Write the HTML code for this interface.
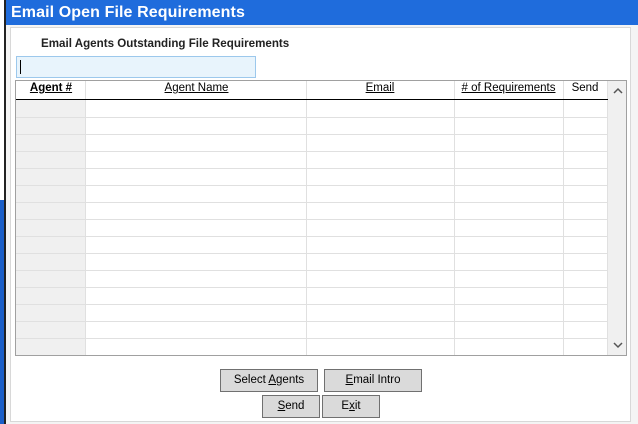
<!DOCTYPE html>
<html><head><style>
*{margin:0;padding:0;box-sizing:border-box}
body{width:638px;height:424px;overflow:hidden;background:#f0f0f0;font-family:"Liberation Sans",Arial,sans-serif;position:relative}
.a{position:absolute}
.hd{font-size:11.5px;color:#000;text-align:center;top:82px;text-decoration:underline}
.btn{position:absolute;background:#dadada;border:1px solid #707070;font-size:11.5px;text-align:center;line-height:20px;color:#000}
</style></head><body>
<div class="a" style="left:0;top:0;width:5px;height:200px;background:#fff"></div>
<div class="a" style="left:0;top:200px;width:5px;height:224px;background:#1c5fc8"></div>
<div class="a" style="left:4px;top:0;width:2px;height:424px;background:#222"></div>
<div class="a" style="left:6px;top:0;width:632px;height:25px;background:#1f6cdc;color:#fff;font-weight:bold;font-size:16px;line-height:26px;padding-left:5px;letter-spacing:0.1px">Email Open File Requirements</div>
<div class="a" style="left:6px;top:25px;width:632px;height:399px;background:#f4f4f4"></div>
<div class="a" style="left:10px;top:27px;width:621px;height:395px;background:#fff;border:1px solid #d8d8d8"></div>
<div class="a" style="left:41px;top:37px;font-size:11.6px;font-weight:bold;color:#222">Email Agents Outstanding File Requirements</div>
<div class="a" style="left:16px;top:56px;width:240px;height:22px;background:#e8f4fc;border:1px solid #9cc8ec"></div>
<div class="a" style="left:20px;top:60px;width:1px;height:14px;background:#000"></div>
<div class="a" style="left:15px;top:80px;width:612px;height:276px;border:1px solid #a0a0a0;background:#fff;overflow:hidden">
<svg class="a" style="left:0;top:0" width="610" height="274">
<rect x="0" y="19" width="69" height="255" fill="#f0f0f0"/>
<g stroke="#e0e0e0" stroke-width="1">
<line x1="69.5" y1="0" x2="69.5" y2="274"/><line x1="290.5" y1="0" x2="290.5" y2="274"/><line x1="438.5" y1="0" x2="438.5" y2="274"/><line x1="547.5" y1="0" x2="547.5" y2="274"/><line x1="591.5" y1="0" x2="591.5" y2="274"/>
<line x1="0" y1="36.5" x2="592" y2="36.5"/><line x1="0" y1="53.5" x2="592" y2="53.5"/><line x1="0" y1="70.5" x2="592" y2="70.5"/><line x1="0" y1="87.5" x2="592" y2="87.5"/><line x1="0" y1="104.5" x2="592" y2="104.5"/><line x1="0" y1="121.5" x2="592" y2="121.5"/><line x1="0" y1="138.5" x2="592" y2="138.5"/><line x1="0" y1="155.5" x2="592" y2="155.5"/><line x1="0" y1="172.5" x2="592" y2="172.5"/><line x1="0" y1="189.5" x2="592" y2="189.5"/><line x1="0" y1="206.5" x2="592" y2="206.5"/><line x1="0" y1="223.5" x2="592" y2="223.5"/><line x1="0" y1="240.5" x2="592" y2="240.5"/><line x1="0" y1="257.5" x2="592" y2="257.5"/>
</g>
<line x1="0" y1="18.5" x2="592" y2="18.5" stroke="#000"/>
<rect x="592" y="0" width="18" height="274" fill="#f0f0f0"/>
<path d="M598 12l4-4 4 4" stroke="#555" stroke-width="1.5" fill="none"/>
<path d="M598 262l4 4 4-4" stroke="#555" stroke-width="1.5" fill="none"/>
</svg>
</div>
<div class="a hd" style="left:16px;width:70px;font-weight:bold">Agent #</div>
<div class="a hd" style="left:86px;width:221px">Agent Name</div>
<div class="a hd" style="left:306px;width:148px">Email</div>
<div class="a hd" style="left:454px;width:109px">#&nbsp;of Requirements</div>
<div class="a hd" style="left:563px;width:44px;text-decoration:none">Send</div>
<div class="btn" style="left:220px;top:369px;width:98px;height:23px">Select <u>A</u>gents</div>
<div class="btn" style="left:324px;top:369px;width:98px;height:23px"><u>E</u>mail Intro</div>
<div class="btn" style="left:262px;top:395px;width:58px;height:23px"><u>S</u>end</div>
<div class="btn" style="left:322px;top:395px;width:58px;height:23px">E<u>x</u>it</div>
</body></html>
